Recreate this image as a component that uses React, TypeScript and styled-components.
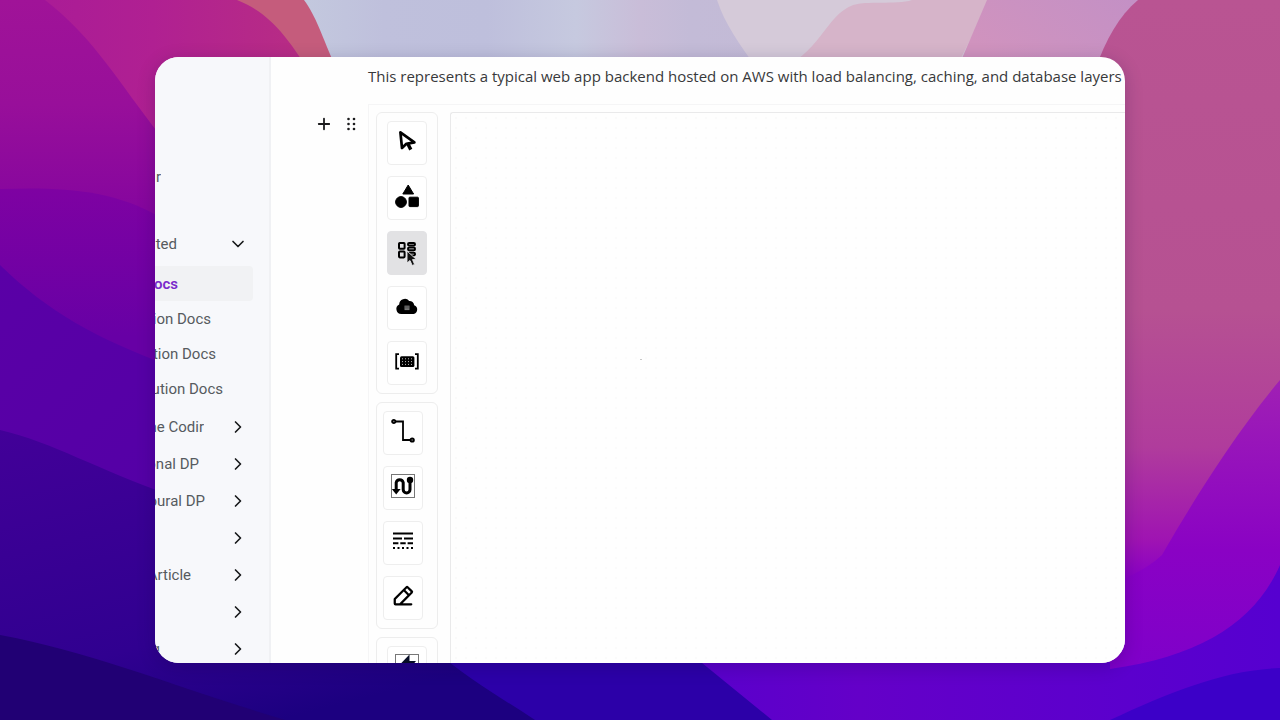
import React from "react";
import styled, { createGlobalStyle } from "styled-components";
import { ChevronDown, ChevronRight, Plus } from "lucide-react";
import { PiPencilSimpleLineBold } from "react-icons/pi";

const GlobalStyle = createGlobalStyle`
  *, *::before, *::after { box-sizing: border-box; }
  body {
    margin: 0;
    background: #3a0098;
    font-family: Roboto, Inter, "Liberation Sans", sans-serif;
  }
  button { font: inherit; color: inherit; padding: 0; margin: 0; border: 0; background: none; cursor: pointer; }
  svg { display: block; flex: none; }
`;

const Desktop = styled.div`
  position: relative;
  height: 100vh;
  display: flex;
  padding: 57px 155px;
  overflow: hidden;
`;

const WallpaperSvg = styled.svg`
  position: absolute;
  inset: 0;
  width: 100%;
  height: 100%;
`;

const Window = styled.div`
  position: relative;
  flex: 1;
  min-width: 0;
  display: flex;
  overflow: hidden;
  border-radius: 24px;
  background: #fefefe;
  box-shadow: 0 4px 18px rgba(20, 0, 60, 0.22);
`;

const Sidebar = styled.nav`
  flex: none;
  width: 116px;
  padding-top: 101px;
  overflow: hidden;
  background: #f7f8fb;
  border-right: 2px solid #f0f1f4;
`;

const NavList = styled.ul`
  list-style: none;
  margin: 0;
  padding: 0;
`;

const SubList = styled(NavList)`
  padding: 4px 16px 2px 0;
`;

const NavGroup = styled.li<{ $spaced?: boolean }>`
  margin-bottom: ${(p) => (p.$spaced ? 30 : 0)}px;
`;

const NavButton = styled.button`
  display: flex;
  align-items: center;
  justify-content: space-between;
  width: 100%;
  height: 37px;
  padding-right: 21px;
  color: #565b5f;
  font-size: 15px;
  line-height: 20px;
  svg { color: #16181a; }
`;

const SubLink = styled.a<{ $active?: boolean }>`
  display: flex;
  align-items: center;
  height: 35px;
  border-radius: 0 4px 4px 0;
  text-decoration: none;
  font-size: 15px;
  line-height: 20px;
  font-weight: ${(p) => (p.$active ? 600 : 400)};
  color: ${(p) => (p.$active ? "#7a2bcb" : "#565b5f")};
  background: ${(p) => (p.$active ? "#f1f2f4" : "transparent")};
`;

/* Shows the tail of a label whose start runs out past the window edge. */
const Label = styled.span<{ $width: number }>`
  flex: none;
  display: flex;
  justify-content: flex-end;
  width: ${(p) => p.$width}px;
  white-space: nowrap;
  overflow: hidden;
`;

const Main = styled.main`
  flex: 1;
  min-width: 0;
  padding-left: 39px;
  display: grid;
  grid-template-columns: 58px minmax(0, 1fr);
  grid-template-rows: 47px minmax(0, 1fr);
`;

const Paragraph = styled.p`
  grid-column: 2;
  margin: 0;
  padding-top: 8px;
  font-family: "Open Sans", Roboto, sans-serif;
  font-size: 15px;
  line-height: 22px;
  color: #38393b;
  white-space: nowrap;
`;

const BlockHandles = styled.div`
  display: flex;
  align-items: flex-start;
  padding-top: 6px;
`;

const HandleButton = styled.button`
  display: flex;
  align-items: center;
  justify-content: center;
  width: 27px;
  height: 27px;
  color: #1c1c1e;
`;

const Editor = styled.section`
  display: flex;
  gap: 12px;
  min-height: 0;
  padding: 7px 0 0 7px;
  border: solid #f5f5f6;
  border-width: 1px 0 0 1px;
`;

const ToolRail = styled.div`
  flex: none;
  display: flex;
  flex-direction: column;
  gap: 8px;
  width: 62px;
`;

const ToolGroup = styled.div<{ $inset?: number }>`
  flex: none;
  display: flex;
  flex-direction: column;
  gap: 11px;
  padding: 8px 0 8px ${(p) => p.$inset ?? 10}px;
  border: 1px solid #ededed;
  border-radius: 6px;
`;

const ToolButton = styled.button<{ $active?: boolean }>`
  position: relative;
  flex: none;
  display: flex;
  align-items: center;
  justify-content: center;
  width: 40px;
  height: 44px;
  padding-bottom: 4px;
  color: #000;
  border: 1px solid ${(p) => (p.$active ? "#e2e2e4" : "#eeeeee")};
  border-radius: 4px;
  background: ${(p) => (p.$active ? "#e2e2e4" : "#fff")};
`;

const Pointer = styled.svg`
  position: absolute;
  left: 18px;
  top: 18px;
`;

const Canvas = styled.div`
  position: relative;
  flex: 1;
  min-width: 0;
  border: solid #e9e9ea;
  border-width: 1px 0 0 1px;
  border-radius: 3px 0 0 0;
  background: #fefefe radial-gradient(circle, #fafafa 1px, transparent 1px) 0 0 / 10px 10px;
`;

const CanvasMark = styled.span`
  position: absolute;
  left: 189px;
  top: 246px;
  width: 2px;
  height: 1px;
  background: #c8c8c8;
`;

const Wallpaper = () => (
  <WallpaperSvg viewBox="0 0 1280 720" preserveAspectRatio="none" aria-hidden="true">
    <defs>
      <linearGradient id="sky" x1="0" x2="1" y1="0" y2="0">
        <stop offset="0.24" stopColor="#c3c8de" />
        <stop offset="0.3" stopColor="#bfc0dc" />
        <stop offset="0.38" stopColor="#bebfdc" />
        <stop offset="0.45" stopColor="#c6c9df" />
        <stop offset="0.5" stopColor="#c9bdd8" />
        <stop offset="0.54" stopColor="#c3bbd7" />
        <stop offset="1" stopColor="#c6b5d2" />
      </linearGradient>
      <linearGradient id="leftTop" x1="0" x2="0" y1="0" y2="1">
        <stop offset="0" stopColor="#a01398" />
        <stop offset="0.4" stopColor="#980f9a" />
        <stop offset="0.8" stopColor="#86069e" />
      </linearGradient>
      <linearGradient id="ridge" x1="0" x2="1" y1="0" y2="0">
        <stop offset="0" stopColor="#a81a98" />
        <stop offset="0.5" stopColor="#b02092" />
        <stop offset="1" stopColor="#b82d84" />
      </linearGradient>
      <linearGradient id="leftMid" x1="0" x2="0" y1="0" y2="1">
        <stop offset="0" stopColor="#7e02a2" />
        <stop offset="0.7" stopColor="#6700a5" />
      </linearGradient>
      <linearGradient id="leftLow" x1="0" x2="0.7" y1="0" y2="1">
        <stop offset="0" stopColor="#5a00a6" />
        <stop offset="1" stopColor="#5400a6" />
      </linearGradient>
      <linearGradient id="indigo" x1="0" x2="0.5" y1="0" y2="1">
        <stop offset="0" stopColor="#420098" />
        <stop offset="0.7" stopColor="#300090" />
        <stop offset="1" stopColor="#1c0080" />
      </linearGradient>
      <linearGradient id="rightTop" x1="0" x2="0" y1="0" y2="1">
        <stop offset="0" stopColor="#b95492" />
        <stop offset="0.5" stopColor="#b65192" />
        <stop offset="0.72" stopColor="#b03c9c" />
        <stop offset="0.87" stopColor="#9f14b2" />
        <stop offset="0.93" stopColor="#8a02c4" />
      </linearGradient>
      <linearGradient id="violet" x1="0" x2="0" y1="0" y2="1">
        <stop offset="0" stopColor="#a020b4" />
        <stop offset="0.5" stopColor="#8a02c4" />
        <stop offset="1" stopColor="#7a00cc" />
      </linearGradient>
      <linearGradient id="lowRight" x1="0" x2="1" y1="0" y2="0">
        <stop offset="0" stopColor="#5800cc" />
        <stop offset="0.3" stopColor="#6400c8" />
        <stop offset="1" stopColor="#5600d0" />
      </linearGradient>
      <linearGradient id="orchid" x1="0" x2="1" y1="0.4" y2="0">
        <stop offset="0" stopColor="#d093be" />
        <stop offset="1" stopColor="#c290c6" />
      </linearGradient>
    </defs>
    <rect width="1280" height="720" fill="url(#sky)" />
    <path d="M717 0 C725 24 738 42 758 70 H960 L990 0Z" fill="#d5cad9" />
    <path d="M790 64 C826 44 830 4 865 3 C880 2 900 4 912 0 H990 L955 70 H790Z" fill="#d6b4c9" />
    <path d="M987 0 L957 70 H1120 L1160 0Z" fill="url(#orchid)" />
    <path d="M0 0 H304 C316 16 322 36 336 68 V300 H0Z" fill="#c55c7c" />
    <path d="M0 0 H237 C272 14 288 40 306 66 V300 H0Z" fill="url(#ridge)" />
    <path d="M0 0 H45 C96 40 118 82 160 135 V260 H0Z" fill="url(#leftTop)" />
    <path d="M0 189 C60 187 112 189 160 217 V400 H0Z" fill="url(#leftMid)" />
    <path d="M0 265 C48 312 96 338 170 366 V520 H0Z" fill="url(#leftLow)" />
    <path d="M0 430 C52 442 98 470 170 495 V640 H470 L560 720 H0Z" fill="url(#indigo)" />
    <path d="M0 635 C92 652 178 688 285 720 H0Z" fill="#210074" />
    <path d="M434 650 C467 678 500 697 535 720 H790 L700 640Z" fill="#2c00a8" />
    <path d="M1138 0 C1119 16 1106 39 1095 70 V620 H1280 V0Z" fill="url(#rightTop)" />
    <path d="M1280 380 C1230 440 1188 510 1162 555 C1144 572 1120 580 1100 590 V720 H1280Z" fill="url(#violet)" />
    <path d="M680 645 L772 720 H1280 V565 C1256 620 1204 656 1110 669 V630Z" fill="url(#lowRight)" />
    <path d="M1110 720 C1170 692 1224 670 1280 668 V720Z" fill="#3c00c8" />
  </WallpaperSvg>
);

const GripIcon = () => (
  <svg width="12" height="14" viewBox="0 0 12 14" fill="currentColor">
    {[2, 7, 12].map((y) => (
      <React.Fragment key={y}>
        <circle cx="3.5" cy={y} r="1.3" />
        <circle cx="9" cy={y} r="1.3" />
      </React.Fragment>
    ))}
  </svg>
);

const CursorIcon = () => (
  <svg width="18" height="22" viewBox="0 0 18 22" fill="none" stroke="currentColor">
    <path d="M2.4 2.4 L4 18 L8.4 13.8 L16.4 12.4Z" strokeWidth="2.7" strokeLinejoin="round" />
    <path d="M9.4 13 L12.8 19.6" strokeWidth="3.4" />
  </svg>
);

const ShapesIcon = () => (
  <svg width="24" height="24" viewBox="0 0 24 24" fill="currentColor" stroke="currentColor" strokeLinejoin="round">
    <path d="M13.2 1 L18.6 10 H7.8Z" />
    <circle cx="6" cy="18" r="5.4" />
    <rect x="14" y="13.2" width="9.4" height="9.4" rx="0.8" />
  </svg>
);

const WidgetsIcon = () => (
  <svg width="22" height="22" viewBox="0 0 22 22" fill="none" stroke="currentColor" strokeWidth="2">
    <rect x="3" y="3" width="5.6" height="5.8" rx="0.8" />
    <rect x="3" y="11.6" width="5.6" height="5.8" rx="0.8" />
    <rect x="12" y="3" width="7" height="2.6" rx="1.3" />
    <rect x="12" y="7.6" width="7" height="2.6" rx="1.3" />
    <rect x="12" y="12.8" width="7" height="2.6" rx="1.3" />
  </svg>
);

const CloudIcon = () => (
  <svg width="24" height="20" viewBox="0 0 24 20">
    <path
      fill="currentColor"
      d="M6.2 18 A5 5 0 0 1 4.2 8.5 A5.6 5.6 0 0 1 14.2 5 A4.6 4.6 0 0 1 19.2 9.2 A4.6 4.6 0 0 1 18.6 18Z"
    />
    <rect x="9.5" y="9.6" width="5" height="4.5" fill="#777" />
    <path d="M11 9.6 v3 M13 9.6 v3" stroke="#333" strokeWidth="0.7" />
  </svg>
);

const ContainerIcon = () => (
  <svg width="24" height="20" viewBox="0 0 24 20">
    <path d="M4 3.2 H1.2 V17.7 H4 M20 3.2 H22.8 V17.7 H20" fill="none" stroke="currentColor" strokeWidth="1.8" />
    <rect x="5" y="5.3" width="14.4" height="10.8" rx="1.5" fill="currentColor" />
    <g fill="#bbb">
      {[7, 10, 13, 16].map((x) => (
        <React.Fragment key={x}>
          <rect x={x} y="7.3" width="1" height="1" />
          <rect x={x} y="10.1" width="1" height="1" />
          <rect x={x} y="12.9" width="1" height="1" />
        </React.Fragment>
      ))}
    </g>
  </svg>
);

const ElbowIcon = () => (
  <svg width="24" height="26" viewBox="0 0 24 26" fill="none" stroke="currentColor" strokeWidth="1.8">
    <circle cx="2.8" cy="3.5" r="1.7" fill="#777" />
    <path d="M4.5 3.5 H12 V22 H19.5" />
    <circle cx="21.2" cy="22" r="1.7" fill="#777" />
  </svg>
);

const RouteIcon = () => (
  <svg width="24" height="24" viewBox="0 0 24 24">
    <rect x="0.5" y="0.5" width="23" height="23" fill="none" stroke="#777" />
    <path
      d="M5.2 17 V8.5 A3.6 3.6 0 0 1 12.2 8.5 V15.5 A3.4 3.4 0 0 0 19 15.5 V6"
      fill="none"
      stroke="currentColor"
      strokeWidth="3"
    />
    <circle cx="19" cy="6" r="3.2" fill="currentColor" />
    <path d="M0.8 15 H9.6 L5.2 20.5Z" fill="currentColor" />
  </svg>
);

const LineStyleIcon = () => (
  <svg width="22" height="20" viewBox="0 0 22 20" stroke="currentColor" strokeWidth="2" fill="none">
    <path d="M1 2.5 H21" />
    <path d="M1 7.4 H10 M12 7.4 H21" />
    <path d="M1 12.3 H6.4 M8.3 12.3 H13.7 M15.6 12.3 H21" />
    <path d="M1 17 H21" strokeDasharray="2 2.5" />
  </svg>
);

const BoltIcon = () => (
  <svg width="24" height="24" viewBox="0 0 24 24">
    <rect x="0.5" y="0.5" width="23" height="23" fill="none" stroke="#777" />
    <path d="M14.5 0.5 L3 12.5 H10 L8 23 L21 7 H14.5Z" fill="#070d26" />
  </svg>
);

type Item = { label: string; width: number; spaced?: boolean; open?: boolean; plain?: boolean };

const items: Item[] = [
  { label: "r", width: 6, spaced: true, plain: true },
  { label: "ted", width: 22, open: true },
  { label: "he Codir", width: 49 },
  { label: "onal DP", width: 44 },
  { label: "oural DP", width: 50 },
  { label: "", width: 0 },
  { label: "Article", width: 36 },
  { label: "", width: 0 },
  { label: "g", width: 5 },
];

const subItems = [
  { label: "Docs", width: 23, active: true },
  { label: "tion Docs", width: 56 },
  { label: "ution Docs", width: 61 },
  { label: "cution Docs", width: 68 },
];

export default function App() {
  return (
    <>
      <GlobalStyle />
      <Desktop>
        <Wallpaper />
        <Window>
          <Sidebar aria-label="Documents">
            <NavList>
              {items.map((item, i) => (
                <NavGroup key={i} $spaced={item.spaced}>
                  <NavButton type="button" aria-expanded={item.plain ? undefined : !!item.open}>
                    <Label $width={item.width}>{item.label}</Label>
                    {!item.plain && (item.open ? <ChevronDown size={20} /> : <ChevronRight size={20} />)}
                  </NavButton>
                  {item.open && (
                    <SubList>
                      {subItems.map((sub) => (
                        <li key={sub.label}>
                          <SubLink href="#" $active={sub.active}>
                            <Label $width={sub.width}>{sub.label}</Label>
                          </SubLink>
                        </li>
                      ))}
                    </SubList>
                  )}
                </NavGroup>
              ))}
            </NavList>
          </Sidebar>
          <Main>
            <Paragraph>
              This represents a typical web app backend hosted on AWS with load balancing, caching, and database layers
            </Paragraph>
            <BlockHandles>
              <HandleButton type="button" aria-label="Add block">
                <Plus size={18} strokeWidth={2.4} />
              </HandleButton>
              <HandleButton type="button" aria-label="Move block">
                <GripIcon />
              </HandleButton>
            </BlockHandles>
            <Editor aria-label="Diagram editor">
              <ToolRail role="toolbar" aria-orientation="vertical">
                <ToolGroup>
                  <ToolButton type="button" aria-label="Select">
                    <CursorIcon />
                  </ToolButton>
                  <ToolButton type="button" aria-label="Shapes">
                    <ShapesIcon />
                  </ToolButton>
                  <ToolButton type="button" aria-label="Widgets" $active>
                    <WidgetsIcon />
                    <Pointer width="12" height="18" viewBox="0 0 12 18">
                      <path
                        d="M1 1 V13 L4 10.5 L6.2 15.5 L8.6 14.4 L6.5 9.6 H10.5Z"
                        fill="#111"
                        stroke="#e8e8ea"
                        strokeWidth="0.9"
                      />
                    </Pointer>
                  </ToolButton>
                  <ToolButton type="button" aria-label="Cloud services">
                    <CloudIcon />
                  </ToolButton>
                  <ToolButton type="button" aria-label="Containers">
                    <ContainerIcon />
                  </ToolButton>
                </ToolGroup>
                <ToolGroup $inset={6}>
                  <ToolButton type="button" aria-label="Connector">
                    <ElbowIcon />
                  </ToolButton>
                  <ToolButton type="button" aria-label="Route">
                    <RouteIcon />
                  </ToolButton>
                  <ToolButton type="button" aria-label="Line style">
                    <LineStyleIcon />
                  </ToolButton>
                  <ToolButton type="button" aria-label="Draw">
                    <PiPencilSimpleLineBold size={24} />
                  </ToolButton>
                </ToolGroup>
                <ToolGroup>
                  <ToolButton type="button" aria-label="Actions">
                    <BoltIcon />
                  </ToolButton>
                </ToolGroup>
              </ToolRail>
              <Canvas>
                <CanvasMark />
              </Canvas>
            </Editor>
          </Main>
        </Window>
      </Desktop>
    </>
  );
}
